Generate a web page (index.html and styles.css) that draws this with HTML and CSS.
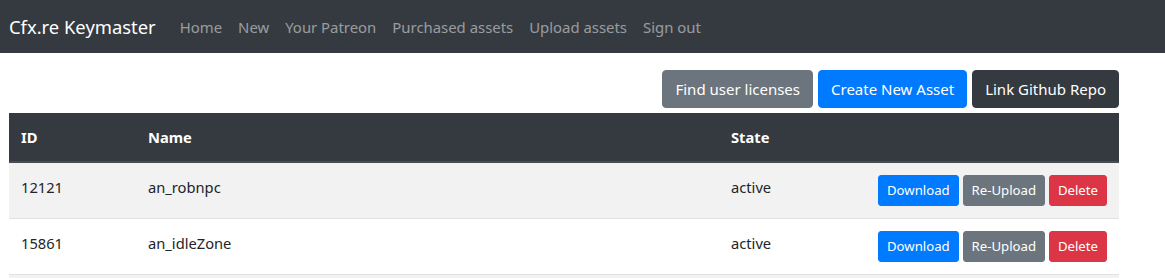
FILE: index.html
```html
<!DOCTYPE html>
<html lang="en">
<head>
  <meta charset="UTF-8" />
  <title>Cfx.re Keymaster</title>
  <link rel="stylesheet" href="styles.css">
</head>
<body>
  <nav class="navbar">
    <a class="brand" href="#">Cfx.re Keymaster</a>
    <a class="nav-link" href="#">Home</a>
    <a class="nav-link" href="#">New</a>
    <a class="nav-link" href="#">Your Patreon</a>
    <a class="nav-link" href="#">Purchased assets</a>
    <a class="nav-link" href="#">Upload assets</a>
    <a class="nav-link" href="#">Sign out</a>
  </nav>

  <div class="content">
    <div class="toolbar">
      <button class="btn btn-secondary">Find user licenses</button>
      <button class="btn btn-primary">Create New Asset</button>
      <button class="btn btn-dark">Link Github Repo</button>
    </div>

    <table class="assets">
      <thead>
        <tr>
          <th class="col-id">ID</th>
          <th class="col-name">Name</th>
          <th class="col-state">State</th>
          <th class="col-actions"></th>
        </tr>
      </thead>
      <tbody>
        <tr>
          <td>12121</td>
          <td>an_robnpc</td>
          <td>active</td>
          <td class="actions">
            <button class="btn btn-sm btn-primary">Download</button>
            <button class="btn btn-sm btn-secondary">Re-Upload</button>
            <button class="btn btn-sm btn-danger">Delete</button>
          </td>
        </tr>
        <tr>
          <td>15861</td>
          <td>an_idleZone</td>
          <td>active</td>
          <td class="actions">
            <button class="btn btn-sm btn-primary">Download</button>
            <button class="btn btn-sm btn-secondary">Re-Upload</button>
            <button class="btn btn-sm btn-danger">Delete</button>
          </td>
        </tr>
        <tr class="more">
          <td></td>
          <td></td>
          <td></td>
          <td></td>
        </tr>
      </tbody>
    </table>
  </div>
</body>
</html>
```
FILE: styles.css
```css
* {
  box-sizing: border-box;
}

body {
  margin: 0;
  font-family: "Noto Sans", "Open Sans", sans-serif;
  font-size: 14.7px;
  line-height: 24px;
  color: #212529;
  background-color: white;
}

.navbar {
  display: flex;
  align-items: center;
  height: 53px;
  padding: 0 8px;
  background-color: #343a40;
}

.brand {
  font-size: 18.4px;
  line-height: 30px;
  color: white;
  text-decoration: none;
  margin-left: 1px;
  margin-right: 16px;
}

.nav-link {
  padding: 0 8px;
  font-size: 14.9px;
  color: rgba(255, 255, 255, 0.5);
  text-decoration: none;
}

.content {
  width: 1110px;
  margin-left: 9px;
}

.toolbar {
  display: flex;
  justify-content: flex-end;
  gap: 5px;
  margin-top: 17px;
  margin-bottom: 5px;
}

.btn {
  font-family: inherit;
  font-size: 15px;
  line-height: 24px;
  padding: 6px 12px;
  border: 1px solid transparent;
  border-radius: 4px;
  color: white;
  cursor: pointer;
}

.btn-sm {
  font-size: 13.2px;
  line-height: 21px;
  padding: 4px 8px;
  border-radius: 3px;
}

.btn-primary {
  background-color: #007bff;
  border-color: #007bff;
}

.btn-secondary {
  background-color: #6c757d;
  border-color: #6c757d;
}

.btn-dark {
  background-color: #343a40;
  border-color: #343a40;
}

.btn-danger {
  background-color: #dc3545;
  border-color: #dc3545;
}

.assets {
  width: 100%;
  border-collapse: collapse;
}

.assets th {
  text-align: left;
  font-weight: bold;
  color: white;
  background-color: #343a40;
  padding: 12px;
  border-bottom: 2px solid #454d55;
}

.col-id {
  width: 127px;
}

.col-name {
  width: 583px;
}

.col-state {
  width: 145px;
}

.assets td {
  padding: 12px;
  vertical-align: top;
  border-top: 1px solid #dee2e6;
}

.assets tbody tr:nth-child(odd) {
  background-color: rgba(0, 0, 0, 0.05);
}

.assets .more td {
  height: 56px;
}

.actions {
  text-align: right;
  white-space: nowrap;
}
```
